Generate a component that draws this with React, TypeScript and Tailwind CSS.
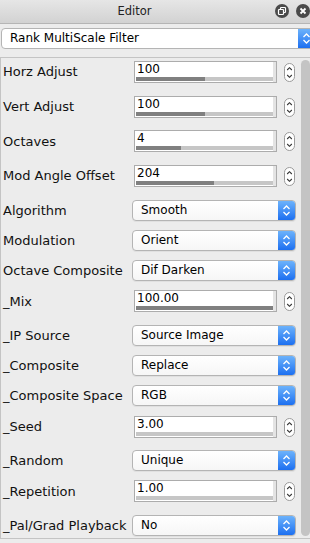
import React from "react";

type Row =
  | { kind: "num"; label: string; value: string; fill: number }
  | { kind: "sel"; label: string; value: string };

const rows: Row[] = [
  { kind: "num", label: "Horz Adjust", value: "100", fill: 0.5 },
  { kind: "num", label: "Vert Adjust", value: "100", fill: 0.5 },
  { kind: "num", label: "Octaves", value: "4", fill: 0.33 },
  { kind: "num", label: "Mod Angle Offset", value: "204", fill: 0.57 },
  { kind: "sel", label: "Algorithm", value: "Smooth" },
  { kind: "sel", label: "Modulation", value: "Orient" },
  { kind: "sel", label: "Octave Composite", value: "Dif Darken" },
  { kind: "num", label: "_Mix", value: "100.00", fill: 1 },
  { kind: "sel", label: "_IP Source", value: "Source Image" },
  { kind: "sel", label: "_Composite", value: "Replace" },
  { kind: "sel", label: "_Composite Space", value: "RGB" },
  { kind: "num", label: "_Seed", value: "3.00", fill: 0 },
  { kind: "sel", label: "_Random", value: "Unique" },
  { kind: "num", label: "_Repetition", value: "1.00", fill: 0 },
  { kind: "sel", label: "_Pal/Grad Playback", value: "No" },
];

function BlueArrows({ w }: { w: number }) {
  return (
    <svg width={w} height="19" viewBox={`0 0 ${w} 19`}>
      <path d={`M${w / 2 - 3} 8 L${w / 2} 5 L${w / 2 + 3} 8`} stroke="#fff" strokeWidth="1.3" fill="none" />
      <path d={`M${w / 2 - 3} 11 L${w / 2} 14 L${w / 2 + 3} 11`} stroke="#fff" strokeWidth="1.3" fill="none" />
    </svg>
  );
}

function Spin() {
  return (
    <svg width="11" height="19" viewBox="0 0 11 19" className="mt-[2px] ml-[7px] shrink-0">
      <rect x="0.5" y="0.5" width="10" height="18" rx="5" fill="#fff" stroke="#9a9a9a" />
      <path d="M3.2 7 L5.5 4.7 L7.8 7" stroke="#333" strokeWidth="1.1" fill="none" />
      <path d="M3.2 12 L5.5 14.3 L7.8 12" stroke="#333" strokeWidth="1.1" fill="none" />
    </svg>
  );
}

function NumField({ value, fill }: { value: string; fill: number }) {
  return (
    <div className="flex items-start">
      <div className="w-[143px] h-[22px] bg-white border border-[#acacac] flex shrink-0">
        <div className="flex-1 flex flex-col">
          <div className="h-[14px] leading-[15px] pl-[2px] text-[12px] text-black">{value}</div>
          <div className="mt-auto mb-[1px] ml-[1px] h-[4px] bg-[#c6c6c6]">
            <div className="h-full bg-[#808080]" style={{ width: `${fill * 100}%` }} />
          </div>
        </div>
        <div className="w-[3px] bg-[#e4e4e4]" />
      </div>
      <Spin />
    </div>
  );
}

function Select({ value }: { value: string }) {
  return (
    <div className="w-[164px] h-[21px] flex rounded-[4px] border border-[#b4b4b4] bg-gradient-to-b from-white to-[#f6f6f6] overflow-hidden shrink-0 shadow-[0_1px_0_rgba(0,0,0,0.05)]">
      <div className="flex-1 pl-[8px] text-[12px] leading-[19px] text-black">{value}</div>
      <div className="w-[17px] h-full bg-gradient-to-b from-[#6cb2fb] to-[#1c6ff0] flex items-center justify-center">
        <BlueArrows w={17} />
      </div>
    </div>
  );
}

export default function App() {
  return (
    <div className="w-[310px] h-[543px] overflow-hidden bg-[#ececec] font-['DejaVu_Sans',sans-serif] text-[#111]">
      {/* Title bar */}
      <div className="h-[24px] border-b border-[#b5b5b5] bg-gradient-to-b from-[#e6e6e6] to-[#d2d2d2] flex items-center">
        <div className="w-[273px] text-center text-[11.5px] text-[#222]">Editor</div>
        <svg width="14" height="14" viewBox="0 0 14 14" className="ml-[6px] mt-[-2px] shrink-0">
          <circle cx="7" cy="7" r="7" fill="#4a4a4a" />
          <rect x="5.5" y="3.5" width="5" height="5" rx="0.8" fill="none" stroke="#fff" strokeWidth="1.2" />
          <rect x="3.5" y="5.5" width="5" height="5" rx="0.8" fill="#4a4a4a" stroke="#fff" strokeWidth="1.2" />
        </svg>
        <svg width="14" height="14" viewBox="0 0 14 14" className="ml-[7px] mt-[-2px] shrink-0">
          <circle cx="7" cy="7" r="7" fill="#4a4a4a" />
          <path d="M4.5 4.5 L9.5 9.5 M9.5 4.5 L4.5 9.5" stroke="#fff" strokeWidth="1.8" />
        </svg>
      </div>

      {/* Preset dropdown */}
      <div className="mt-[4px] ml-[1px] w-[320px] h-[21px] flex rounded-l-[4px] border border-[#b4b4b4] bg-white overflow-hidden">
        <div className="w-[296px] pl-[8px] text-[12px] leading-[19px] text-black">Rank MultiScale Filter</div>
        <div className="w-[17px] h-full bg-gradient-to-b from-[#6cb2fb] to-[#1c6ff0] flex items-center justify-center">
          <BlueArrows w={17} />
        </div>
      </div>

      {/* Scroll frame */}
      <div className="mt-[8px] h-[482px] border-t border-b border-l border-[#c4c4c4] flex">
        <div className="flex-1 pl-[2px] pt-[3px] flex flex-col">
          {rows.map((r, i) =>
            r.kind === "num" ? (
              <div key={i} className="h-[34.7px] flex items-start shrink-0">
                <div className="w-[131px] h-[22px] flex items-center text-[13px] whitespace-nowrap">{r.label}</div>
                <NumField value={r.value} fill={r.fill} />
              </div>
            ) : (
              <div key={i} className="h-[30.2px] flex items-start shrink-0">
                <div className="w-[129px] h-[21px] flex items-center text-[13px] whitespace-nowrap">{r.label}</div>
                <Select value={r.value} />
              </div>
            )
          )}
        </div>
        <div className="w-[11px] pl-[2px] py-[2px] flex">
          <div className="w-[9px] flex-1 rounded-full bg-[#c4c4c4]" />
        </div>
      </div>
    </div>
  );
}
